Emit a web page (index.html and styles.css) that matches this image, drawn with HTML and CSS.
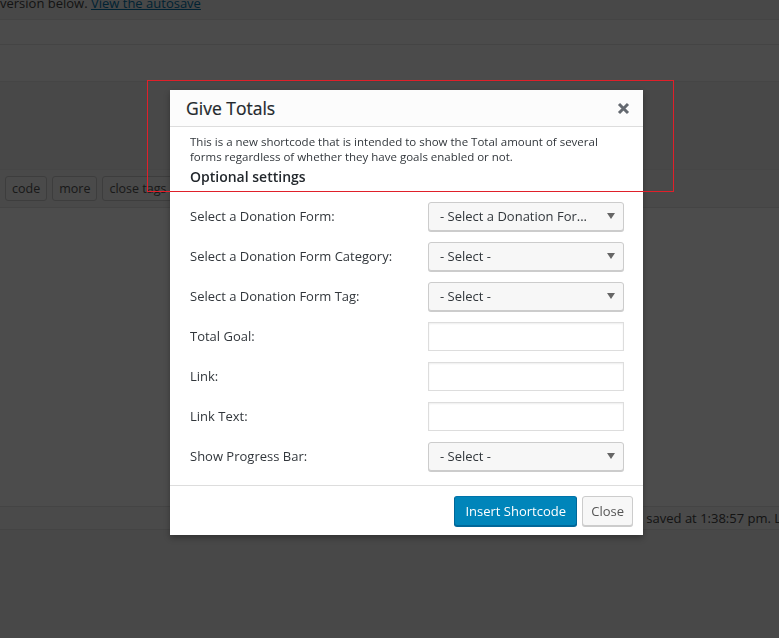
FILE: index.html
```html
<!DOCTYPE html>
<html>
<head>
<meta charset="utf-8">
<link rel="stylesheet" href="styles.css">
</head>
<body>
<div class="page">
  <div class="notice"><span class="cut">version below. <a href="#">View the autosave</a></span></div>
  <div class="band band-a"></div>
  <div class="band band-b"></div>
  <div class="editor">
    <div class="editor-top"></div>
    <div class="toolbar">
      <span class="qt">code</span>
      <span class="qt">more</span>
      <span class="qt">close tags</span>
    </div>
    <div class="editor-body"></div>
    <div class="status"><span class="status-text">Draft saved at 1:38:57 pm. Last edited</span></div>
  </div>
</div>
<div class="overlay"></div>
<div class="highlight"></div>
<div class="dialog">
  <div class="dlg-head">
    <h1 class="dlg-title">Give Totals</h1>
    <span class="dlg-close">
      <svg width="13" height="13" viewBox="0 0 13 13"><path d="M2 2 L11 11 M11 2 L2 11" stroke="#646970" stroke-width="3" stroke-linecap="butt"/></svg>
    </span>
  </div>
  <div class="dlg-body">
    <p class="desc">This is a new shortcode that is intended to show the Total amount of several forms regardless of whether they have goals enabled or not.</p>
    <h2 class="opt">Optional settings</h2>
  </div>
  <div class="form">
    <div class="row"><span class="lbl">Select a Donation Form:</span><div class="sel"><span>- Select a Donation For...</span><i class="arrow"></i></div></div>
    <div class="row"><span class="lbl">Select a Donation Form Category:</span><div class="sel"><span>- Select -</span><i class="arrow"></i></div></div>
    <div class="row"><span class="lbl">Select a Donation Form Tag:</span><div class="sel"><span>- Select -</span><i class="arrow"></i></div></div>
    <div class="row"><span class="lbl">Total Goal:</span><div class="inp"></div></div>
    <div class="row"><span class="lbl">Link:</span><div class="inp"></div></div>
    <div class="row"><span class="lbl">Link Text:</span><div class="inp"></div></div>
    <div class="row"><span class="lbl">Show Progress Bar:</span><div class="sel"><span>- Select -</span><i class="arrow"></i></div></div>
  </div>
  <div class="dlg-foot">
    <button class="btn primary">Insert Shortcode</button>
    <button class="btn">Close</button>
  </div>
</div>
</body>
</html>
```
FILE: styles.css
```css
html, body {
  margin: 0;
  padding: 0;
  width: 779px;
  height: 638px;
  overflow: hidden;
  background: #f1f1f1;
  font-family: "Open Sans", "Noto Sans", sans-serif;
}
.page {
  display: flex;
  flex-direction: column;
}
.notice {
  height: 19px;
  border-bottom: 1px solid #e5e5e5;
  background: #f1f1f1;
  overflow: hidden;
}
.cut {
  display: block;
  margin-top: -6px;
  font-size: 13px;
  color: #444;
  white-space: nowrap;
}
.cut a { color: #0073aa; }
.band-a {
  height: 24px;
  background: #fbfbfb;
  border-bottom: 1px solid #e5e5e5;
}
.band-b {
  height: 36px;
  background: #fafafa;
  border-bottom: 1px solid #e8e8e8;
}
.editor {
  display: flex;
  flex-direction: column;
}
.editor-top {
  height: 87px;
  background: #f1f1f1;
  border-bottom: 1px solid #eaeaea;
}
.toolbar {
  height: 37px;
  background: #f5f5f5;
  border-bottom: 1px solid #e5e5e5;
  display: flex;
  align-items: center;
  gap: 5px;
  padding-left: 5px;
}
.qt {
  height: 23px;
  line-height: 23px;
  padding: 0 6px;
  border: 1px solid #ccc;
  border-radius: 3px;
  background: #f7f7f7;
  font-size: 12.5px;
  color: #555;
}
.editor-body {
  height: 298px;
  background: #fff;
  border-bottom: 1px solid #e5e5e5;
}
.status {
  height: 22px;
  background: #f7f7f7;
  border-bottom: 1px solid #e5e5e5;
  overflow: hidden;
  display: flex;
  align-items: center;
}
.status-text {
  margin-left: 612px;
  font-size: 13px;
  color: #444;
  white-space: nowrap;
}
.overlay {
  position: fixed;
  inset: 0;
  background: rgba(0, 0, 0, 0.7);
}
.highlight {
  position: absolute;
  left: 147px;
  top: 80px;
  width: 525px;
  height: 110px;
  border: 1px solid #e0202a;
  z-index: 5;
}
.dialog {
  position: absolute;
  left: 170px;
  top: 90px;
  width: 473px;
  height: 445px;
  background: #fff;
  box-shadow: 0 3px 6px rgba(0, 0, 0, 0.3);
  display: flex;
  flex-direction: column;
  color: #32373c;
}
.dlg-head {
  height: 36px;
  background: #fcfcfc;
  border-bottom: 1px solid #dddddd;
  display: flex;
  align-items: center;
  justify-content: space-between;
  padding: 0 13px 0 16px;
}
.dlg-title {
  margin: 0;
  font-size: 17.5px;
  font-weight: 400;
  color: #23282d;
  -webkit-text-stroke: 0.2px #23282d;
}
.dlg-close {
  display: flex;
  width: 13px;
  height: 13px;
}
.dlg-body {
  padding: 7px 20px 0 20px;
  border-bottom: 1px solid #32373c;
  height: 65px;
  box-sizing: border-box;
}
.desc {
  margin: 0;
  font-size: 11.5px;
  line-height: 15px;
  color: #32373c;
}
.opt {
  margin: 3px 0 0;
  font-size: 14px;
  font-weight: 600;
  color: #23282d;
}
.form {
  box-sizing: border-box;
  padding: 9px 20px 0 20px;
  display: flex;
  flex-direction: column;
  gap: 10px;
  height: 294px;
  border-bottom: 1px solid #ddd;
}
.row {
  display: flex;
  align-items: center;
  justify-content: space-between;
  height: 30px;
}
.lbl {
  font-size: 13px;
  color: #32373c;
}
.sel, .inp {
  width: 196px;
  height: 29px;
  box-sizing: border-box;
  border: 1px solid #ddd;
  border-radius: 3px;
  margin-right: -1px;
}
.sel {
  background: #f7f7f7;
  border-color: #ccc;
  box-shadow: 0 1px 0 #ccc;
  display: flex;
  align-items: center;
  justify-content: space-between;
  padding: 0 8px 0 11px;
  font-size: 13px;
  color: #32373c;
}
.inp {
  background: #fff;
  border-radius: 0;
  box-shadow: inset 0 1px 2px rgba(0, 0, 0, 0.07);
}
.arrow {
  width: 0;
  height: 0;
  border-left: 4px solid transparent;
  border-right: 4px solid transparent;
  border-top: 6px solid #666;
}
.dlg-foot {
  flex: 1;
  display: flex;
  justify-content: flex-end;
  align-items: center;
  gap: 5px;
  padding: 0 10px;
}
.btn {
  height: 30px;
  padding: 0 8px;
  font-family: inherit;
  font-size: 13px;
  border: 1px solid #ccc;
  border-radius: 3px;
  background: #f7f7f7;
  box-shadow: 0 1px 0 #ccc;
  color: #555;
}
.btn.primary {
  background: #0085ba;
  border-color: #0073aa #006799 #006799;
  box-shadow: 0 1px 0 #006799;
  color: #fff;
  width: 123px;
}
```
